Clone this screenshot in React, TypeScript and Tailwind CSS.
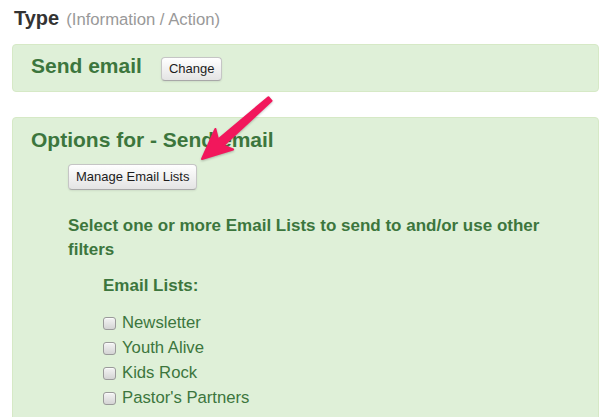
import React from "react";

const btn =
  "inline-flex items-center rounded-[4px] border border-[#c5c5c5] border-b-[#a8a8a8] bg-gradient-to-b from-white to-[#e4e4e4] px-[7px] text-[13px] text-[#1c1c1c] shadow-[0_1px_2px_rgba(0,0,0,0.08)] font-['Liberation_Sans',Arial,sans-serif]";

function Check({ label }: { label: string }) {
  return (
    <div className="flex h-[25px] items-center">
      <span className="mt-[1px] inline-block h-[13px] w-[13px] rounded-[3px] border border-[#9a9a9a] bg-gradient-to-b from-[#f4f4f4] to-[#d4d4d4] shadow-[inset_0_1px_0_rgba(255,255,255,0.6)]" />
      <span className="ml-[6px] text-[16.7px] leading-[25px] text-[#3c763d]">{label}</span>
    </div>
  );
}

export default function App() {
  return (
    <div className="relative min-h-[417px] overflow-hidden bg-white px-3 pt-[6px] font-['Liberation_Sans',Arial,sans-serif]">
      <div className="flex items-baseline pl-[2px]">
        <span className="text-[20px] font-bold leading-[24px] text-[#333]">Type</span>
        <span className="ml-[7px] text-[16.7px] leading-[24px] text-[#999]">(Information / Action)</span>
      </div>

      <div className="mt-3 rounded-[4px] border border-[#d6e9c6] bg-[#dff0d8] px-[18px] pt-[9px] pb-[10px]">
        <div className="flex items-start">
          <span className="text-[21px] font-bold leading-[24px] text-[#3c763d]">Send email</span>
          <span className={btn + " ml-[19px] mt-[3px] h-[24px] leading-[22px]"}>Change</span>
        </div>
      </div>

      <div className="mt-[25px] rounded-[4px] border border-[#d6e9c6] bg-[#dff0d8] px-[18px] pt-[10px] pb-[40px]">
        <div className="text-[21px] font-bold leading-[24px] text-[#3c763d]">Options for - Send email</div>
        <div className="mt-[12px] pl-[37px]">
          <span className={btn + " h-[26px] leading-[24px]"}>Manage Email Lists</span>
        </div>
        <div className="mt-[24px] pl-[37px] pr-[10px] text-[17px] font-bold leading-[24px] text-[#3c763d]">
          Select one or more Email Lists to send to and/or use other filters
        </div>
        <div className="mt-[12px] pl-[72px] text-[17px] font-bold leading-[24px] text-[#3c763d]">Email Lists:</div>
        <div className="mt-[12px] pl-[72px]">
          <Check label="Newsletter" />
          <Check label="Youth Alive" />
          <Check label="Kids Rock" />
          <Check label="Pastor's Partners" />
        </div>
      </div>

      <svg
        className="pointer-events-none absolute left-0 top-0"
        width="611"
        height="417"
        viewBox="0 0 611 417"
        style={{ filter: "drop-shadow(0 1px 1px rgba(0,0,0,0.25))" }}
      >
        <path
          d="M268.4 97.2 L271.6 100.8 L223.4 145.5 L233.1 149.5 L202 159 L215.4 129 L218.1 139.5 Z"
          fill="#f2175c"
          stroke="#f2175c"
          strokeWidth="2"
          strokeLinejoin="round"
        />
      </svg>
    </div>
  );
}
